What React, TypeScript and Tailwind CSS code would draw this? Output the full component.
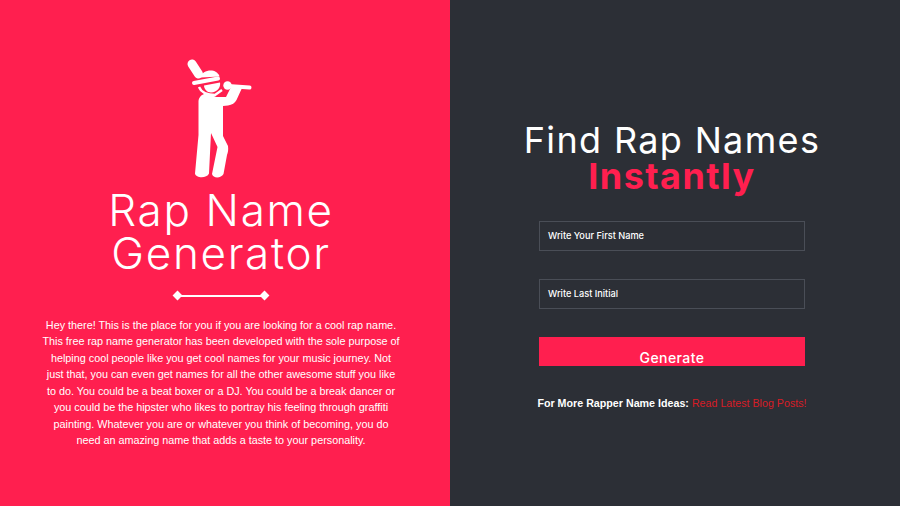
const intro = [
  'Hey there! This is the place for you if you are looking for a cool rap name.',
  'This free rap name generator has been developed with the sole purpose of',
  'helping cool people like you get cool names for your music journey. Not',
  'just that, you can even get names for all the other awesome stuff you like',
  'to do. You could be a beat boxer or a DJ. You could be a break dancer or',
  'you could be the hipster who likes to portray his feeling through graffiti',
  'painting. Whatever you are or whatever you think of becoming, you do',
  'need an amazing name that adds a taste to your personality.',
]

function RapperIcon() {
  return (
    <svg viewBox="0 0 140 150" className="w-[140px] h-[150px]" fill="#fff">
      {/* baton */}
      <path d="M41 23 L47.5 33" stroke="#fff" strokeWidth="9" strokeLinecap="round" />
      {/* cap and brim */}
      <path d="M43 42 L67 37.5" stroke="#fff" strokeWidth="4" strokeLinecap="round" />
      <path d="M50 36.5 C50 31.5 56 29 61 29.5 C65 30 68 33 68.5 35.5 Z" />
      <path d="M53 44.5 L69 41.5 C70 46 66 51.5 60 51.5 C56 51.5 53 48 53 44.5 Z" />
      {/* violin strap */}
      <path d="M48 46 C50 51 55 54 64 54 L71 49" stroke="#fff" strokeWidth="2.4" fill="none" />
      {/* bow and hand */}
      <circle cx="76.5" cy="44.5" r="4.2" />
      <path d="M77 45 L98.5 46.5" stroke="#fff" strokeWidth="4" strokeLinecap="round" />
      <path d="M47.5 60 C48 55 52 52 58 52.5 L65 56 L75 56 L80 46 L91 47 L85.5 59 C84 62 81 64 77 64.5 L72 65 L72 95 L77 105 C77.5 109 77 111 76 114 L72.5 133 C70 137.5 62 137.5 61 133 L66.5 106 L60 92 L58 132.5 C56 137.5 45 137.5 44 132.5 L47.5 94 Z" />
    </svg>
  )
}

export default function App() {
  return (
    <div className="flex w-[900px] h-[506px] overflow-hidden">
      <div className="w-[450px] h-full bg-[#ff1f4f] flex flex-col items-center pt-[41px] pr-[8px] text-white">
        <RapperIcon />
        <h1 className="mt-[-2px] text-[44px] leading-[43px] font-light text-center tracking-[0.038em] font-['Inter','Liberation_Sans',sans-serif]">
          Rap Name
          <br />
          Generator
        </h1>
        <div className="mt-[17px] flex items-center w-[94px]">
          <span className="w-[7px] h-[7px] bg-white rotate-45 shrink-0" />
          <span className="flex-1 h-[2px] bg-white" />
          <span className="w-[7px] h-[7px] bg-white rotate-45 shrink-0" />
        </div>
        <p className="mt-[18px] text-[10.8px] leading-[16.45px] text-center whitespace-nowrap font-['Liberation_Sans',Arial,sans-serif]">
          {intro.map(line => (
            <span key={line} className="block">{line}</span>
          ))}
        </p>
      </div>

      <div className="w-[450px] h-full bg-[#2c2f36] flex flex-col items-center pt-[122px] pr-[6px]">
        <h2 className="text-[36px] leading-[36px] text-white text-center font-normal tracking-[0.0375em] font-['Inter','Liberation_Sans',sans-serif] whitespace-nowrap">
          Find Rap Names
          <br />
          <span className="text-[#ff1f4f] font-bold tracking-[0.04em]">Instantly</span>
        </h2>
        <div className="mt-[27px] w-[266px] flex flex-col gap-[28px]">
          <div className="h-[30px] border border-[#4a4e57] flex items-center px-2 text-white text-[9.2px] font-medium font-['Inter','Liberation_Sans',sans-serif]">
            Write Your First Name
          </div>
          <div className="h-[30px] border border-[#4a4e57] flex items-center px-2 text-white text-[9.2px] font-medium font-['Inter','Liberation_Sans',sans-serif]">
            Write Last Initial
          </div>
          <button className="h-[29px] bg-[#ff1f4f] text-white text-[14px] font-medium pt-[12px] leading-[18px] tracking-[0.03em] font-['Inter','Liberation_Sans',sans-serif]">
            Generate
          </button>
        </div>
        <p className="mt-[30px] text-[10.7px] leading-[14px] font-bold text-white whitespace-nowrap font-['Liberation_Sans',Arial,sans-serif]">
          For More Rapper Name Ideas:{' '}
          <a className="font-normal text-[#d81c26]">Read Latest Blog Posts!</a>
        </p>
      </div>
    </div>
  )
}
